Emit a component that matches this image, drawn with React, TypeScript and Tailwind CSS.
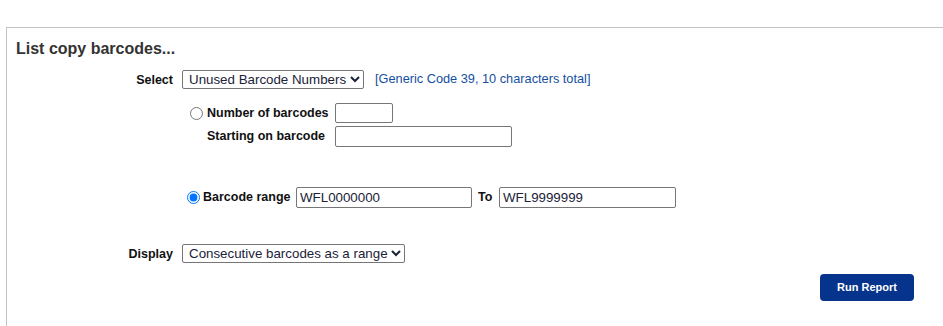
import { useState } from 'react';

export default function App() {
  const [mode, setMode] = useState<'count' | 'range'>('range');

  const label = 'text-[12.5px] leading-[15px] font-bold text-[#111]';
  const field =
    'border border-[#767676] rounded-[2px] bg-white px-[3px] text-[13.33px] text-[#1b2238] outline-none';

  return (
    <div className="min-h-[326px] bg-white font-['Liberation_Sans',Arial,sans-serif] pt-[27px] pl-[6px]">
      <div className="border-t border-l border-[#c3c3c3] min-h-[299px] pt-[12px] pl-[9px]">
        <h2 className="text-[16px] leading-[18px] font-bold text-[#333]">List copy barcodes...</h2>

        <div className="-ml-[9px] mt-[9px]">
          {/* Select row */}
          <div className="flex items-center">
            <div className="w-[175px] pr-[9px] text-right">
              <span className={label}>Select</span>
            </div>
            <select
              className="h-[19px] w-[182px] border border-[#767676] rounded-[2px] bg-white pl-[2px] text-[13.33px] text-[#1b2238]"
              defaultValue="unused"
            >
              <option value="unused">Unused Barcode Numbers</option>
              <option value="used">Used Barcode Numbers</option>
              <option value="all">All Barcode Numbers</option>
            </select>
            <span className="ml-[11px] text-[12.75px] text-[#1550a0]">[Generic Code 39, 10 characters total]</span>
          </div>

          <div className="pl-[175px]">
            {/* Number of barcodes */}
            <div className="mt-[12px] flex items-center pl-[8px]">
              <input
                type="radio"
                name="mode"
                checked={mode === 'count'}
                onChange={() => setMode('count')}
                className="m-0 h-[13px] w-[13px]"
              />
              <span className={`${label} ml-[4px] w-[128px]`}>Number of barcodes</span>
              <input type="text" className={`${field} h-[20px] w-[58px]`} />
            </div>
            <div className="mt-[3px] flex items-center pl-[25px]">
              <span className={`${label} w-[128px]`}>Starting on barcode</span>
              <input type="text" className={`${field} h-[21px] w-[177px]`} />
            </div>

            {/* Barcode range */}
            <div className="mt-[40px] flex items-center pl-[5px]">
              <input
                type="radio"
                name="mode"
                checked={mode === 'range'}
                onChange={() => setMode('range')}
                className="m-0 h-[13px] w-[13px]"
              />
              <span className={`${label} ml-[3px] w-[93px]`}>Barcode range</span>
              <input type="text" defaultValue="WFL0000000" className={`${field} h-[21px] w-[176px]`} />
              <span className={`${label} ml-[6px] w-[21px]`}>To</span>
              <input type="text" defaultValue="WFL9999999" className={`${field} h-[21px] w-[177px]`} />
            </div>
          </div>

          {/* Display row */}
          <div className="mt-[33px] flex items-center">
            <div className="w-[175px] pr-[9px] text-right">
              <span className={label}>Display</span>
            </div>
            <select
              className="h-[19px] w-[223px] border border-[#767676] rounded-[2px] bg-white pl-[2px] text-[13.33px] text-[#1b2238]"
              defaultValue="range"
            >
              <option value="range">Consecutive barcodes as a range</option>
              <option value="each">Each barcode individually</option>
            </select>
          </div>

          <div className="mt-[9px] flex justify-end pr-[29px]">
            <button className="h-[27px] w-[94px] rounded-[4px] bg-[#06348c] text-[11px] font-bold text-white">
              Run Report
            </button>
          </div>
        </div>
      </div>
    </div>
  );
}
